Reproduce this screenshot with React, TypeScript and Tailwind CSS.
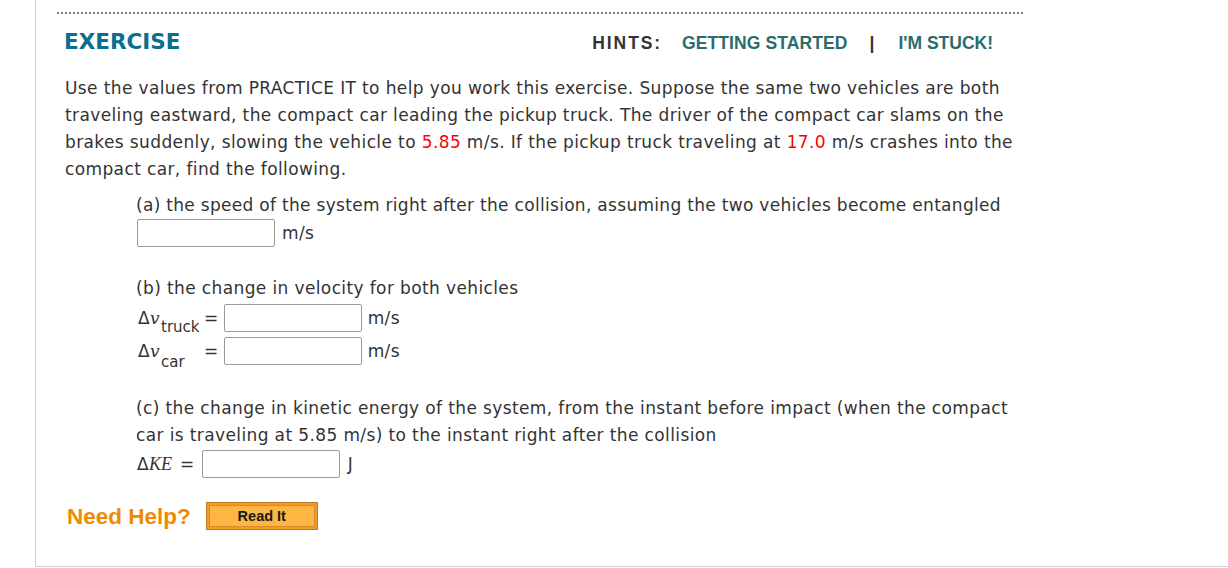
import React from "react";

function Box({ w = 138 }: { w?: number }) {
  return (
    <span
      className="inline-block h-[28px] border border-[#9a9a9a] rounded-[2px] bg-white align-middle"
      style={{ width: w }}
    />
  );
}

export default function App() {
  return (
    <div className="w-[1228px] h-[568px] bg-white overflow-hidden font-['DejaVu_Sans',sans-serif] text-[#333]">
      <div className="ml-[35px] h-[567px] border-l border-b border-[#cfcfcf] pt-[12px] pl-[21px]">
        <div className="w-[966px] border-t-2 border-dotted border-[#808080]" />
        <div className="flex items-baseline mt-[15px] pl-[7px] w-[959px]">
          <div className="font-bold text-[21.5px] leading-[26px] text-[#0a6f8e]">EXERCISE</div>
          <div className="ml-auto mr-[23px] -mt-[3px] flex items-baseline font-['Liberation_Sans',sans-serif] font-bold text-[17.5px] leading-[24px]">
            <span className="text-[#333] tracking-[1.9px]">HINTS:</span>
            <span className="ml-[20px] text-[#2c6b6c] tracking-[0.1px]">GETTING STARTED</span>
            <span className="ml-[22px] text-[#333]">|</span>
            <span className="ml-[24px] text-[#2c6b6c]">I'M STUCK!</span>
          </div>
        </div>
        <div className="pl-[8px] w-[964px] mt-[20px] text-[17px] leading-[27px] tracking-[0.38px]">
          <p>
            Use the values from PRACTICE IT to help you work this exercise. Suppose the same two vehicles are both
            traveling eastward, the compact car leading the pickup truck. The driver of the compact car slams on the
            brakes suddenly, slowing the vehicle to <span className="text-[#ff0000]">5.85</span> m/s. If the pickup
            truck traveling at <span className="text-[#ff0000]">17.0</span> m/s crashes into the compact car, find the
            following.
          </p>
          <div className="pl-[71px] mt-[9px]">
            <div className="tracking-[0.3px]">(a) the speed of the system right after the collision, assuming the two vehicles become entangled</div>
            <div className="flex items-center h-[28px] pl-px">
              <Box />
              <span className="ml-[7px]">m/s</span>
            </div>
            <div className="mt-[28px]">(b) the change in velocity for both vehicles</div>
            <div className="mt-[2px] flex flex-col gap-[5px]">
              <div className="flex items-center h-[28px]">
                <span className="w-[68px] relative h-[28px]">
                  <span className="absolute left-[2px] top-[1px]">
                    Δ<span className="font-['DejaVu_Serif',serif] italic tracking-normal">v</span>
                  </span>
                  <span className="absolute left-[25px] top-[10px] text-[15px] tracking-[0px]">truck</span>
                </span>
                <span>=</span>
                <span className="ml-[5px]"><Box /></span>
                <span className="ml-[6px]">m/s</span>
              </div>
              <div className="flex items-center h-[28px]">
                <span className="w-[68px] relative h-[28px]">
                  <span className="absolute left-[2px] top-[1px]">
                    Δ<span className="font-['DejaVu_Serif',serif] italic tracking-normal">v</span>
                  </span>
                  <span className="absolute left-[25px] top-[12px] text-[15px] tracking-[0px]">car</span>
                </span>
                <span>=</span>
                <span className="ml-[5px]"><Box /></span>
                <span className="ml-[6px]">m/s</span>
              </div>
            </div>
            <div className="mt-[30px]">
              (c) the change in kinetic energy of the system, from the instant before impact (when the compact
              <br />
              car is traveling at 5.85 m/s) to the instant right after the collision
            </div>
            <div className="flex items-center h-[28px] mt-[1px] pl-px">
              <span>
                Δ<span className="font-['Liberation_Serif',serif] italic text-[18px] tracking-normal">KE</span>
              </span>
              <span className="ml-[8px]">=</span>
              <span className="ml-[7px]"><Box /></span>
              <span className="ml-[8px]">J</span>
            </div>
          </div>
          <div className="flex items-center mt-[24px] pl-[2px] tracking-normal">
            <span className="font-['Liberation_Sans',sans-serif] font-bold text-[22.5px] text-[#f08a00]">Need Help?</span>
            <button className="ml-[15px] w-[112px] h-[28px] bg-[#f29a25] border border-[#c4782a] p-[2px]">
              <span className="flex items-center justify-center w-full h-full bg-[#fdb543] border border-[#d98a2a] font-['Liberation_Sans',sans-serif] font-bold text-[14.5px] text-[#1a1a1a]">
                Read It
              </span>
            </button>
          </div>
        </div>
      </div>
    </div>
  );
}
